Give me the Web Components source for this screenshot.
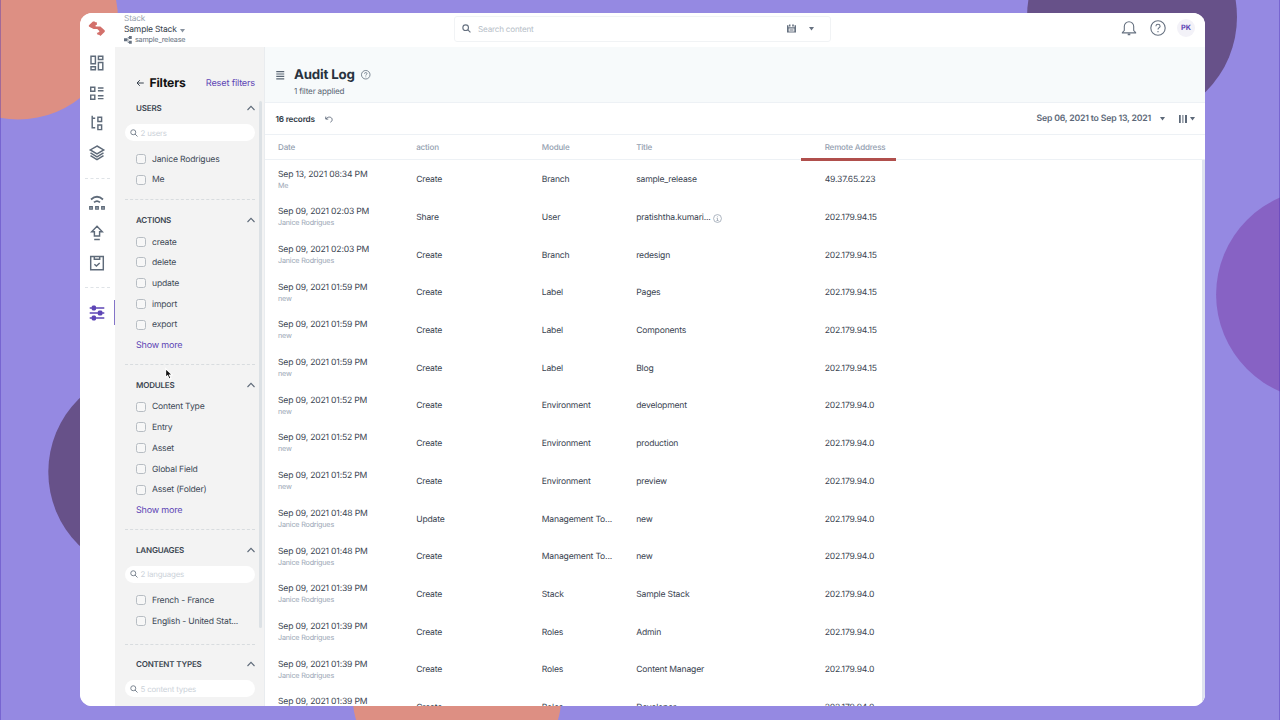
<!DOCTYPE html>
<html lang="en">
<head>
<meta charset="utf-8">
<title>Audit Log</title>
<style>
	body {
		margin: 0;
		width: 1280px;
		height: 720px;
		overflow: hidden;
		font-family: Inter, "Liberation Sans", sans-serif;
		font-size: 8.3px;
		letter-spacing: -0.18px;
		text-rendering: geometricPrecision;
		color: #475161;
		--link: #5d45b5;
		--line: #edf1f5;
	}
</style>
</head>
<body>
<audit-app></audit-app>
<script>
const ICONS = {
	logo: ['0 0 18 18', `<g fill="#d3706b"><path d="M6.2 1.3 9 4.1 7.2 5.9l3.2 3.2H5.6L1.2 6.8c-.6-.6-.6-1.2 0-1.8l3.4-3.3z"/><path d="M5 2.2h3.8v2.6H5z"/><path d="m7.2 6.4 5.2.1 3.9 3.6c.8.7.8 1.5 0 2.2L12.4 16 9.6 13.2l2-1.9-4.4-4.4z"/><path d="M8.8 12.8h4.6v2H9.6z"/></g>`],
	dashboard: ['0 0 16 16', `<path d="M2 1.2h4.4v7.6H2zM9.4 1.2h4.4v3.2H9.4zM2 11.7h4.4v3H2zM9.4 7.4h4.4v7.3H9.4z"/>`],
	list: ['0 0 16 16', `<path d="M1.7 2.2h4.1v4.1H1.7zM1.7 10.1h4.1v4.1H1.7zM8.9 3h5.6M8.9 5.8h5.6M8.9 10.7h5.6M8.9 13.6h5.6"/>`],
	tree: ['0 0 16 16', `<path d="M3.2.8v11.9h3M3.2 3.2h3M8.9 2.2h3.7v4.3H8.9zM8.9 9.9h3.7v4.7H8.9z"/>`],
	layers: ['0 0 16 16', `<path d="m8 1 6.7 3.9L8 8.8 1.3 4.9zM1.5 7.9 8 11.8l6.5-3.9M1.5 10.7 8 14.7l6.5-4"/>`],
	relay: ['0 0 16 16', `<path d="M2 4.5Q8-.9 14 4.5" stroke-width="1.8"/><path d="M5 7.4Q8 4.8 11 7.4" stroke-width="1.8"/><path d="M.8 11.7h2.4v2.4H.8zM6.8 11.7h2.4v2.4H6.8zM12.8 11.7h2.4v2.4h-2.4z"/>`],
	upload: ['0 0 16 16', `<path d="m8 1.2 5.3 5.6h-2.7v4.1H5.4V6.8H2.7zM5.2 14.4h5.6"/>`],
	tasks: ['0 0 16 16', `<path d="M1.7 1.5h12.6v13.3H1.7zM5.3 1.5v2.8h5.4V1.5M5.4 9.2l2 1.8L10.7 8"/>`],
	sliders: ['0 0 16 16', `<path d="M.7 3h14.6M.7 8h14.6M.7 13h14.6"/><path fill="currentColor" stroke="none" d="m2.7 1.4 1-.8H6l1 .8v3.2l-1 .8H3.7l-1-.8zM8.8 6.4l1-.8h2.6l1 .8v3.2l-1 .8H9.8l-1-.8zM2.7 11.4l1-.8H6l1 .8v3.2l-1 .8H3.7l-1-.8z"/>`],
	search: ['0 0 16 16', `<circle cx="6.5" cy="6.5" r="5"/><path d="m10 10 5 5"/>`],
	bell: ['0 0 16 16', `<path d="M3.3 10.6V6.4a4.7 4.7 0 0 1 9.4 0v4.2l1.9 1.8v.5H1.4v-.5z"/><path d="M6.7 14.4h2.6" stroke-width="1.6"/>`],
	help: ['0 0 16 16', `<circle cx="8" cy="8" r="7.2"/><path d="M5.9 6.2Q6 4.3 8 4.3t2.1 1.9C10.1 7.7 8 7.6 8 9.4M8 11v1.2"/>`],
	info: ['0 0 16 16', `<circle cx="8" cy="8" r="7"/><path d="M8 4.2v1.3M6.4 7.4H8v4.2M6.2 11.6h3.7"/>`],
	back: ['0 0 16 16', `<path d="M15.5 8H2M7.6 2.4 2 8l5.6 5.6"/>`],
	chevron: ['0 0 16 16', `<path d="m1 12 7-7.5 7 7.5"/>`],
	caret: ['0 0 16 16', `<path fill="currentColor" stroke="none" d="M0 3h16L8 14z"/>`],
	menu: ['0 0 16 16', `<path d="M.5 1.2h15M.5 5.7h15M.5 10.2h15M.5 14.7h15"/>`],
	undo: ['0 0 16 16', `<path d="M1.5 3.2v5h5M2 8C5 2.5 14.3 3 14.3 9.4c0 2.4-1.5 4.2-3.6 5"/>`],
	save: ['0 0 16 16', `<path fill="currentColor" stroke="none" fill-rule="evenodd" d="M0 2h2.6v3.8h10.8V2H16v13H0zm3.5-1h2.7v3.6H3.5zm5.7 0h2.9v3.6H9.2zM3 8v5.2h10V8zm1.4 1.2h7.2v1H4.4zm0 2h7.2v1H4.4z"/>`],
	branch: ['0 0 16 16', `<path fill="currentColor" stroke="none" d="M0 4.5h6v6H0zM10 0h5.5v5.8H10zM10 9.5h5.5v6H10z"/><path d="M6 7.5h2V3h2M8 7.5V13h2"/>`],
	columns: ['0 0 16 16', `<path fill="currentColor" stroke="none" d="M0 0h3.5v16H0zM6.8 0h2v16h-2zM12 0h4v16h-4z"/>`],
	cursor: ['0 0 16 16', `<path fill="#111" stroke="#fff" d="M3.5.8v11.7l2.7-2.4 2 4.7 2.4-1-2-4.5 3.7-.2z"/>`]
};

class UiIcon extends HTMLElement {

	connectedCallback () {
		const [box, shapes] = ICONS[this.getAttribute('name')];
		const size = this.getAttribute('size') || 16;
		const weight = this.getAttribute('weight') || 1.45;
		this.attachShadow({ mode: 'open' }).innerHTML = `
			<style>
				:host { display: block; flex: none; width: ${size}px; height: ${size}px; }
				svg { display: block; width: 100%; height: 100%; overflow: visible; }
			</style>
			<svg viewBox="${box}" fill="none" stroke="currentColor" stroke-width="${weight}">${shapes}</svg>
		`;
	}

}

class TopBar extends HTMLElement {

	constructor () {
		super();
		this.attachShadow({ mode: 'open' }).innerHTML = `
			<style>
				:host {
					display: grid;
					grid-template-columns: 44px 329.5px 377px 1fr;
					height: 34px;
					background: #fff;
				}
				.logo { padding: 7px 0 0 8px; }
				.stack { line-height: 10.5px; padding-top: 1.4px; }
				.label { color: #98a2ae; font-size: 8.3px; }
				.name { display: flex; align-items: center; gap: 3.5px; font-size: 8.5px; color: #333d49; }
				.name ui-icon { color: #8993a0; }
				.branch { display: flex; align-items: center; gap: 3px; font-size: 7.2px; color: #667180; }
				.branch ui-icon { margin-bottom: 1.5px; }
				.search {
					display: flex;
					align-items: center;
					box-sizing: border-box;
					height: 26px;
					margin-top: 2.5px;
					padding: 0 16px 0 7.5px;
					border: 1px solid #f1f3f5;
					border-radius: 3px;
					color: #667180;
				}
				.search span { flex: 1; margin-left: 7px; color: #b6bec8; font-size: 8.1px; }
				.search ui-icon:last-child { margin-left: 13px; }
				.user { display: flex; align-items: center; justify-content: flex-end; gap: 13px; padding: 0 9.5px 4px 0; color: #667180; }
				.avatar {
					width: 18px;
					margin-left: -2px;
					border-radius: 50%;
					background: #f3f2f8;
					color: var(--link);
					font-size: 7.3px;
					font-weight: 700;
					letter-spacing: 0;
					line-height: 18px;
					text-align: center;
				}
			</style>
			<div class="logo"><ui-icon name="logo" size="18" weight="0"></ui-icon></div>
			<div class="stack">
				<div class="label">Stack</div>
				<div class="name">Sample Stack <ui-icon name="caret" size="5"></ui-icon></div>
				<div class="branch"><ui-icon name="branch" size="8"></ui-icon>sample_release</div>
			</div>
			<div class="search">
				<ui-icon name="search" size="9" weight="2"></ui-icon>
				<span>Search content</span>
				<ui-icon name="save" size="9"></ui-icon>
				<ui-icon name="caret" size="5"></ui-icon>
			</div>
			<div class="user">
				<ui-icon name="bell" size="16" weight="1.1"></ui-icon>
				<ui-icon name="help" size="16" weight="1.1"></ui-icon>
				<div class="avatar">PK</div>
			</div>
		`;
	}

}

class NavRail extends HTMLElement {

	constructor () {
		super();
		this.attachShadow({ mode: 'open' }).innerHTML = `
			<style>
				:host {
					display: flex;
					flex-direction: column;
					align-items: center;
					gap: 14.1px;
					box-sizing: border-box;
					padding-top: 8px;
					background: #fff;
					color: #5f6b7a;
				}
				ui-icon { margin-right: 1px; }
				hr { width: 25px; margin: 2.2px 0; border: 0; border-top: 1px dashed #dfe3e7; }
				.active {
					display: flex;
					justify-content: center;
					align-items: center;
					box-sizing: border-box;
					width: 100%;
					height: 25px;
					margin-top: -4.5px;
					border-right: 1px solid #8474c8;
					color: var(--link);
				}
				.active ui-icon { margin-right: 0; }
			</style>
			<ui-icon name="dashboard"></ui-icon>
			<ui-icon name="list"></ui-icon>
			<ui-icon name="tree"></ui-icon>
			<ui-icon name="layers"></ui-icon>
			<hr>
			<ui-icon name="relay"></ui-icon>
			<ui-icon name="upload"></ui-icon>
			<ui-icon name="tasks"></ui-icon>
			<hr>
			<div class="active"><ui-icon name="sliders"></ui-icon></div>
		`;
	}

}

class FilterGroup extends HTMLElement {

	connectedCallback () {
		const search = this.getAttribute('search');
		const items = (this.getAttribute('items') || '').split('|').filter(Boolean);
		this.attachShadow({ mode: 'open' }).innerHTML = `
			<style>
				:host { display: block; padding-bottom: 12.2px; border-bottom: 1px dashed #d8dcdf; }
				header {
					display: flex;
					align-items: center;
					justify-content: space-between;
					height: 17px;
					padding: 11px 0 3px 11.5px;
					font-size: 8px;
					font-weight: 600;
					color: #39434f;
				}
				header ui-icon { color: #5f6b7a; }
				.search {
					display: flex;
					align-items: center;
					gap: 2.5px;
					height: 17px;
					margin: 4.5px 0 7.5px;
					padding-left: 5.5px;
					border-radius: 9px;
					background: #fff;
					color: #7d8793;
				}
				.search span { color: #ccd2d9; font-size: 7.9px; }
				label { display: flex; align-items: center; gap: 6.5px; height: 19.35px; padding: 1.4px 0 0 11px; color: #404a57; font-size: 8.6px; }
				i { box-sizing: border-box; width: 10px; height: 10px; margin-bottom: 1.6px; border: 1px solid #b7bdc3; border-radius: 2.5px; background: #f7f7f7; }
				a { display: block; height: 17px; line-height: 21.5px; padding-left: 11.5px; color: var(--link); font-size: 9px; }
			</style>
			<header>${this.getAttribute('label')}<ui-icon name="chevron" size="8" weight="2.2"></ui-icon></header>
			${search ? `<div class="search"><ui-icon name="search" size="8" weight="2"></ui-icon><span>${search}</span></div>` : ''}
			${items.map(item => `<label><i></i>${item}</label>`).join('')}
			${this.hasAttribute('more') ? '<a>Show more</a>' : ''}
		`;
	}

}

class FilterPanel extends HTMLElement {

	constructor () {
		super();
		this.attachShadow({ mode: 'open' }).innerHTML = `
			<style>
				:host {
					display: block;
					position: relative;
					box-sizing: border-box;
					padding: 27px 9px 0 9.5px;
					border-right: 1px solid #e9ecef;
					background: #f3f3f3;
					overflow: hidden;
				}
				.head { display: flex; align-items: center; height: 17px; padding-left: 11px; }
				.head ui-icon { color: #39434f; }
				h2 { flex: 1; margin: 0 0 0 6px; font-size: 12.2px; font-weight: 700; color: #111; }
				a { padding-top: 1.6px; color: var(--link); font-size: 9.2px; }
				.groups { margin-top: -2.5px; }
				.users { padding-bottom: 9.5px; }
				.languages { padding-bottom: 12.3px; }
				/* overlay scrollbar */
				.thumb { position: absolute; top: 54px; right: 2px; width: 3px; height: 527px; border-radius: 2px; background: #dce1e5; }
			</style>
			<div class="head"><ui-icon name="back" size="8" weight="2"></ui-icon><h2>Filters</h2><a>Reset filters</a></div>
			<div class="groups">
				<filter-group class="users" label="USERS" search="2 users" items="Janice Rodrigues|Me"></filter-group>
				<filter-group label="ACTIONS" items="create|delete|update|import|export" more></filter-group>
				<filter-group label="MODULES" items="Content Type|Entry|Asset|Global Field|Asset (Folder)" more></filter-group>
				<filter-group class="languages" label="LANGUAGES" search="2 languages" items="French - France|English - United Stat..."></filter-group>
				<filter-group label="CONTENT TYPES" search="5 content types"></filter-group>
			</div>
			<div class="thumb"></div>
		`;
	}

}

const RECORDS = [
	['Sep 13, 2021 08:34 PM', 'Me', 'Create', 'Branch', 'sample_release', '49.37.65.223'],
	['Sep 09, 2021 02:03 PM', 'Janice Rodrigues', 'Share', 'User', 'pratishtha.kumari...', '202.179.94.15'],
	['Sep 09, 2021 02:03 PM', 'Janice Rodrigues', 'Create', 'Branch', 'redesign', '202.179.94.15'],
	['Sep 09, 2021 01:59 PM', 'new', 'Create', 'Label', 'Pages', '202.179.94.15'],
	['Sep 09, 2021 01:59 PM', 'new', 'Create', 'Label', 'Components', '202.179.94.15'],
	['Sep 09, 2021 01:59 PM', 'new', 'Create', 'Label', 'Blog', '202.179.94.15'],
	['Sep 09, 2021 01:52 PM', 'new', 'Create', 'Environment', 'development', '202.179.94.0'],
	['Sep 09, 2021 01:52 PM', 'new', 'Create', 'Environment', 'production', '202.179.94.0'],
	['Sep 09, 2021 01:52 PM', 'new', 'Create', 'Environment', 'preview', '202.179.94.0'],
	['Sep 09, 2021 01:48 PM', 'Janice Rodrigues', 'Update', 'Management To...', 'new', '202.179.94.0'],
	['Sep 09, 2021 01:48 PM', 'Janice Rodrigues', 'Create', 'Management To...', 'new', '202.179.94.0'],
	['Sep 09, 2021 01:39 PM', 'Janice Rodrigues', 'Create', 'Stack', 'Sample Stack', '202.179.94.0'],
	['Sep 09, 2021 01:39 PM', 'Janice Rodrigues', 'Create', 'Roles', 'Admin', '202.179.94.0'],
	['Sep 09, 2021 01:39 PM', 'Janice Rodrigues', 'Create', 'Roles', 'Content Manager', '202.179.94.0'],
	['Sep 09, 2021 01:39 PM', 'Janice Rodrigues', 'Create', 'Roles', 'Developer', '202.179.94.0']
];

class LogTable extends HTMLElement {

	constructor () {
		super();
		this.attachShadow({ mode: 'open' }).innerHTML = `
			<style>
				:host { display: block; }
				.row {
					display: grid;
					grid-template-columns: 138.2px 125.6px 94.4px 188.5px 1fr;
					align-items: center;
					height: 37.69px;
					padding-left: 13px;
					font-size: 8.6px;
					color: #3a4451;
				}
				.header {
					height: 24px;
					margin-bottom: 1.5px;
					border-top: 1px solid var(--line);
					border-bottom: 1px solid var(--line);
					color: #94a0b0;
					font-size: 8.05px;
					font-weight: 500;
				}
				.date { line-height: 11px; }
				.date small { display: block; font-size: 7.2px; line-height: 10.4px; color: #9ba7b5; }
				.title { display: flex; align-items: center; gap: 2px; }
				.title ui-icon { color: #929cab; }
				.remote { position: relative; }
				.remote::after { content: ''; position: absolute; top: 16px; left: -23.5px; width: 95px; height: 2.5px; background: #b04f4c; }
			</style>
			<div class="row header">
				<span>Date</span><span>action</span><span>Module</span><span>Title</span><span class="remote">Remote Address</span>
			</div>
			${RECORDS.map(([date, user, action, module, title, address]) => `
				<div class="row">
					<div class="date">${date}<small>${user}</small></div>
					<span>${action}</span>
					<span>${module}</span>
					<span class="title">${title}${action === 'Share' ? '<ui-icon name="info" size="9" weight="1.3"></ui-icon>' : ''}</span>
					<span>${address}</span>
				</div>
			`).join('')}
		`;
	}

}

class LogPage extends HTMLElement {

	constructor () {
		super();
		this.attachShadow({ mode: 'open' }).innerHTML = `
			<style>
				:host { display: block; position: relative; overflow: hidden; background: #fff; }
				.hero {
					display: grid;
					grid-template-columns: 18px 1fr;
					align-content: start;
					box-sizing: border-box;
					height: 56px;
					padding: 20px 0 0 11px;
					border-bottom: 1px solid var(--line);
					background: #f7fafb;
					color: #596573;
				}
				.hero > ui-icon { margin-top: 3.5px; }
				h1 { display: flex; align-items: center; gap: 6px; margin: 0; font-size: 13.3px; line-height: 17px; color: #28323e; }
				h1 ui-icon { margin-bottom: 1px; color: #667180; }
				p { grid-column: 2; margin: 2px 0 0; font-size: 8.1px; line-height: 10px; }
				.bar { display: flex; align-items: center; height: 31px; padding: 0 9.5px 0 10.5px; color: #5c6878; }
				b { font-weight: 600; font-size: 8.2px; color: #303a46; }
				.undo { flex: 1; margin-left: 10px; }
				.range { font-size: 8.7px; font-weight: 600; }
				.range + ui-icon { margin: 0 14px 0 9px; }
				.bar > :last-child { margin-left: 3px; }
				.thumb { position: absolute; top: 113px; right: 0; width: 3px; bottom: 0; background: #dfe2ef; }
			</style>
			<div class="hero">
				<ui-icon name="menu" size="8.5" weight="2.2"></ui-icon>
				<h1>Audit Log <ui-icon name="help" size="9.5" weight="1.4"></ui-icon></h1>
				<p>1 filter applied</p>
			</div>
			<div class="bar">
				<b>16 records</b>
				<div class="undo"><ui-icon name="undo" size="8" weight="1.8"></ui-icon></div>
				<span class="range">Sep 06, 2021 to Sep 13, 2021</span>
				<ui-icon name="caret" size="5"></ui-icon>
				<ui-icon name="columns" size="8"></ui-icon>
				<ui-icon name="caret" size="5"></ui-icon>
			</div>
			<log-table></log-table>
			<div class="thumb"></div>
		`;
	}

}

class AuditApp extends HTMLElement {

	constructor () {
		super();
		this.attachShadow({ mode: 'open' }).innerHTML = `
			<style>
				:host { display: block; position: relative; box-sizing: border-box; width: 1280px; height: 720px; padding: 13px 75.5px 14px 80px; overflow: hidden; background: #9589e2; }
				.backdrop { position: absolute; inset: 0; }
				.window {
					display: grid;
					position: relative;
					grid-template-rows: 34px 659px;
					height: 693px;
					border-radius: 12px;
					background: #fff;
					overflow: hidden;
				}
				.content { display: grid; grid-template-columns: 35px 150px 1fr; min-height: 0; }
				.content > * { min-height: 0; }
				.pointer { position: absolute; left: 163.2px; top: 368px; }
			</style>
			<svg class="backdrop" width="1280" height="720">
				<circle cx="18" cy="19.5" r="100" fill="#dd8f83"/>
				<circle cx="1132" cy="17" r="105" fill="#675189"/>
				<circle cx="1321.5" cy="294.5" r="105.4" fill="#8762c4"/>
				<circle cx="151.3" cy="472" r="103" fill="#675189"/>
				<circle cx="457" cy="691" r="105" fill="#dd8f83"/>
				<path fill="#4a2fb8" fill-opacity=".4" d="M0 0h1v720H0zM1279 0h1v720h-1z"/>
			</svg>
			<div class="window">
				<top-bar></top-bar>
				<div class="content">
					<nav-rail></nav-rail>
					<filter-panel></filter-panel>
					<log-page></log-page>
				</div>
			</div>
			<ui-icon class="pointer" name="cursor" size="12"></ui-icon>
		`;
	}

}

customElements.define('ui-icon', UiIcon);
customElements.define('top-bar', TopBar);
customElements.define('nav-rail', NavRail);
customElements.define('filter-group', FilterGroup);
customElements.define('filter-panel', FilterPanel);
customElements.define('log-table', LogTable);
customElements.define('log-page', LogPage);
customElements.define('audit-app', AuditApp);
</script>
</body>
</html>
